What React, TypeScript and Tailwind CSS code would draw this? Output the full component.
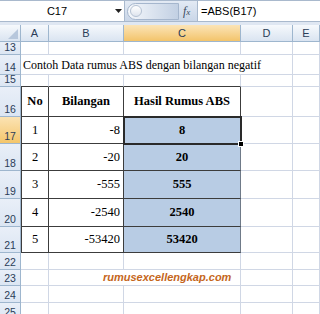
import React from "react";

const SANS = "font-['Liberation_Sans',Arial,sans-serif]";
const SERIF = "font-['Liberation_Serif','Times_New_Roman',serif]";
const GRID = "border-r border-b border-[#d0d7e5]";

const data = [
  { r: 17, no: 1, val: -8 },
  { r: 18, no: 2, val: -20 },
  { r: 19, no: 3, val: -555 },
  { r: 20, no: 4, val: -2540 },
  { r: 21, no: 5, val: -53420 },
];

function RowHead({ n, active }: { n: number; active?: boolean }) {
  return (
    <div
      className={`flex items-end justify-center pb-[2px] border-r border-b border-[#9eb6ce] text-[10.5px] leading-none text-[#2b3d58] ${
        active
          ? "bg-linear-to-b from-[#fbe3b3] to-[#f4c66a]"
          : "bg-linear-to-b from-[#e9eff8] to-[#dce6f3]"
      }`}
    >
      {n}
    </div>
  );
}

function ColHead({ l, active }: { l: string; active?: boolean }) {
  return (
    <div
      className={`flex items-center justify-center border-r border-b border-[#9eb6ce] text-[11px] text-[#2b3d58] ${
        active
          ? "bg-linear-to-b from-[#fbe4b6] to-[#f3c46a]"
          : "bg-linear-to-b from-[#f6f9fc] to-[#dae4f1]"
      }`}
    >
      {l}
    </div>
  );
}

function Empty({ n }: { n: number }) {
  return (
    <>
      <RowHead n={n} />
      <div className={GRID} />
      <div className={GRID} />
      <div className={GRID} />
      <div className={GRID} />
      <div className={GRID} />
    </>
  );
}

export default function App() {
  return (
    <div className={`w-[320px] h-[314px] overflow-hidden bg-white ${SANS}`}>
      {/* formula bar */}
      <div className="h-[22px] flex border-t border-b border-[#a9b9cd] bg-white">
        <div className="w-[125px] flex items-center border-r border-[#a9b9cd]">
          <span className="w-[114px] text-center text-[11px] text-black">C17</span>
          <svg width="7" height="4" viewBox="0 0 7 4" className="ml-[1px]">
            <polygon points="0,0 7,0 3.5,4" fill="#222" />
          </svg>
        </div>
        <div className="w-[72px] flex items-center bg-linear-to-b from-[#e3eaf4] to-[#c9d6e8]">
          <div className="ml-[2px] h-[17px] w-[52px] rounded-l-full border border-[#a5b6cd] bg-linear-to-r from-[#f4f7fb] to-[#c2d0e3] flex items-center">
            <div className="ml-[2px] w-[12px] h-[12px] rounded-full border border-[#b5c2d3] bg-linear-to-b from-white to-[#dfe5ee]" />
          </div>
          <span className={`ml-[4px] italic text-[12px] text-[#3a4a60] ${SERIF}`}>
            f<span className="text-[9px]">x</span>
          </span>
        </div>
        <div className="flex-1 flex items-center border-l border-[#a9b9cd] pl-[3px] text-[11px] text-black">
          =ABS(B17)
        </div>
      </div>
      <div className="h-[3px] bg-[#dfe7f2]" />

      {/* sheet */}
      <div className="relative grid grid-cols-[21px_28px_75px_117px_52px_1fr] grid-rows-[17px_13px_20px_12px_30px_27px_27px_28px_28px_26px_17px_16px_17px_17px]">
        <div className="relative border-r border-b border-[#9eb6ce] bg-linear-to-b from-[#f6f9fc] to-[#dae4f1]">
          <svg width="10" height="10" viewBox="0 0 10 10" className="absolute right-[2px] bottom-[2px]">
            <polygon points="10,0 10,10 0,10" fill="#b7c7dc" />
          </svg>
        </div>
        <ColHead l="A" />
        <ColHead l="B" />
        <ColHead l="C" active />
        <ColHead l="D" />
        <ColHead l="E" />

        <Empty n={13} />

        <RowHead n={14} />
        <div className={`col-span-4 flex items-center pl-[2px] whitespace-nowrap text-[12px] leading-none text-black ${SERIF} ${GRID}`}>
          Contoh Data rumus ABS dengan bilangan negatif
        </div>
        <div className={GRID} />

        <RowHead n={15} />
        <div className="border-r border-b border-r-[#d0d7e5] border-b-[#3c3c3c]" />
        <div className="border-r border-b border-r-[#d0d7e5] border-b-[#3c3c3c]" />
        <div className="border-r border-b border-r-[#d0d7e5] border-b-[#3c3c3c]" />
        <div className={GRID} />
        <div className={GRID} />

        <RowHead n={16} />
        <div className={`flex items-center justify-center border-l border-r border-b border-[#3c3c3c] font-bold text-[12.5px] text-black ${SERIF}`}>
          No
        </div>
        <div className={`flex items-center justify-center border-r border-b border-[#3c3c3c] font-bold text-[12.5px] text-black ${SERIF}`}>
          Bilangan
        </div>
        <div className={`flex items-center justify-center border-r border-b border-[#3c3c3c] font-bold text-[12.5px] text-black ${SERIF}`}>
          Hasil Rumus ABS
        </div>
        <div className={GRID} />
        <div className={GRID} />

        {data.map((d) => (
          <React.Fragment key={d.r}>
            <RowHead n={d.r} active={d.r === 17} />
            <div className={`flex items-center justify-center border-l border-r border-b border-[#3c3c3c] text-[12.5px] text-black ${SERIF}`}>
              {d.no}
            </div>
            <div className={`flex items-center justify-end pr-[3px] border-r border-b border-[#3c3c3c] text-[12.5px] text-black ${SERIF}`}>
              {d.val}
            </div>
            <div className={`flex items-center justify-center bg-[#b8cce4] border-r border-b border-r-[#6f7a88] border-b-[#3c3c3c] font-bold text-[12.5px] text-black ${SERIF}`}>
              {Math.abs(d.val)}
            </div>
            <div className={GRID} />
            <div className={GRID} />
          </React.Fragment>
        ))}

        <Empty n={22} />

        <RowHead n={23} />
        <div className={GRID} />
        <div className={`col-span-2 flex items-center pl-[54px] whitespace-nowrap font-bold italic text-[11px] text-[#c5661b] ${GRID}`}>
          rumusexcellengkap.com
        </div>
        <div className={GRID} />
        <div className={GRID} />

        <Empty n={24} />
        <Empty n={25} />

        {/* selection of C17 */}
        <div className="absolute left-[123px] top-[91px] w-[119px] h-[29px] border-2 border-[#2a2a2a] pointer-events-none" />
        <div className="absolute left-[238px] top-[116px] w-[6px] h-[6px] bg-black border border-white" />
      </div>
    </div>
  );
}
